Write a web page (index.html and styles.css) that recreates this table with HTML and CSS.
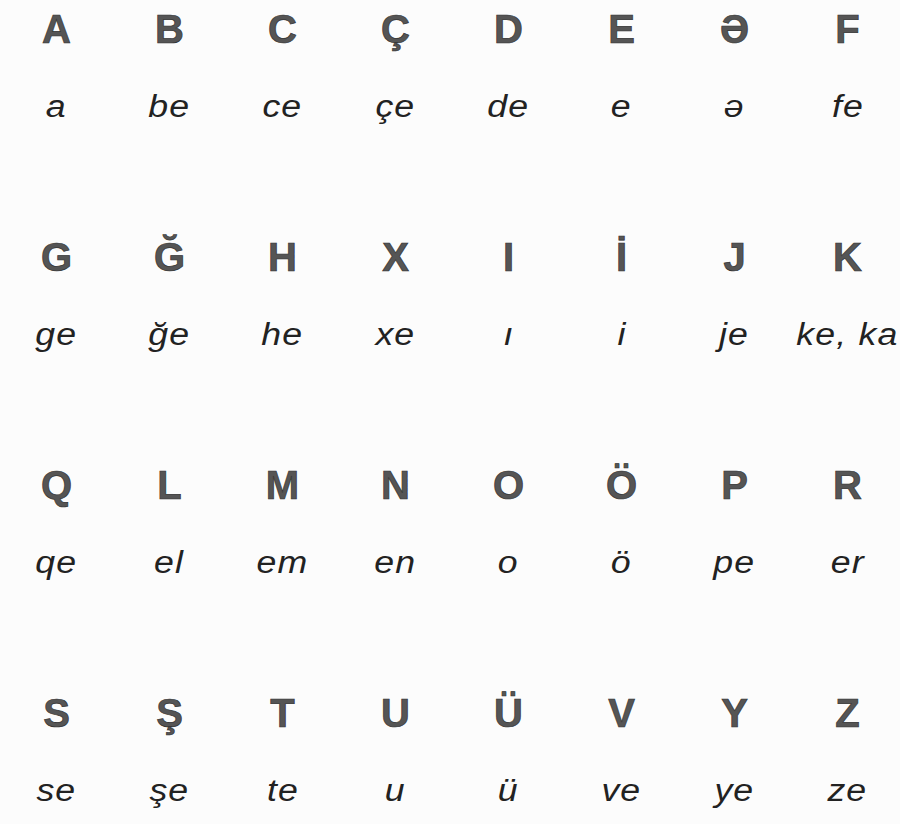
FILE: index.html
```html
<!DOCTYPE html>
<html lang="az">
<head>
<meta charset="utf-8">
<title>Azərbaycan əlifbası</title>
<link rel="stylesheet" href="styles.css">
</head>
<body>
<div class="chart">
  <div class="cell"><span class="letter">A</span><span class="name">a</span></div>
  <div class="cell"><span class="letter">B</span><span class="name">be</span></div>
  <div class="cell"><span class="letter">C</span><span class="name">ce</span></div>
  <div class="cell"><span class="letter">Ç</span><span class="name">çe</span></div>
  <div class="cell"><span class="letter">D</span><span class="name">de</span></div>
  <div class="cell"><span class="letter">E</span><span class="name">e</span></div>
  <div class="cell"><span class="letter">Ə</span><span class="name">ə</span></div>
  <div class="cell"><span class="letter">F</span><span class="name">fe</span></div>

  <div class="cell"><span class="letter">G</span><span class="name">ge</span></div>
  <div class="cell"><span class="letter">Ğ</span><span class="name">ğe</span></div>
  <div class="cell"><span class="letter">H</span><span class="name">he</span></div>
  <div class="cell"><span class="letter">X</span><span class="name">xe</span></div>
  <div class="cell"><span class="letter">I</span><span class="name">ı</span></div>
  <div class="cell"><span class="letter">İ</span><span class="name">i</span></div>
  <div class="cell"><span class="letter">J</span><span class="name">je</span></div>
  <div class="cell"><span class="letter">K</span><span class="name">ke, ka</span></div>

  <div class="cell"><span class="letter">Q</span><span class="name">qe</span></div>
  <div class="cell"><span class="letter">L</span><span class="name">el</span></div>
  <div class="cell"><span class="letter">M</span><span class="name">em</span></div>
  <div class="cell"><span class="letter">N</span><span class="name">en</span></div>
  <div class="cell"><span class="letter">O</span><span class="name">o</span></div>
  <div class="cell"><span class="letter">Ö</span><span class="name">ö</span></div>
  <div class="cell"><span class="letter">P</span><span class="name">pe</span></div>
  <div class="cell"><span class="letter">R</span><span class="name">er</span></div>

  <div class="cell"><span class="letter">S</span><span class="name">se</span></div>
  <div class="cell"><span class="letter">Ş</span><span class="name">şe</span></div>
  <div class="cell"><span class="letter">T</span><span class="name">te</span></div>
  <div class="cell"><span class="letter">U</span><span class="name">u</span></div>
  <div class="cell"><span class="letter">Ü</span><span class="name">ü</span></div>
  <div class="cell"><span class="letter">V</span><span class="name">ve</span></div>
  <div class="cell"><span class="letter">Y</span><span class="name">ye</span></div>
  <div class="cell"><span class="letter">Z</span><span class="name">ze</span></div>
</div>
</body>
</html>
```

FILE: styles.css
```css
html, body {
  margin: 0;
  padding: 0;
  background: #fcfcfc;
  overflow: hidden;
}

body {
  width: 900px;
  height: 824px;
  font-family: "Liberation Sans", Arial, sans-serif;
}

.chart {
  display: grid;
  grid-template-columns: repeat(8, 113px);
  grid-template-rows: repeat(3, 228px) 140px;
  width: 900px;
  height: 824px;
  overflow: hidden;
}

.cell {
  display: flex;
  flex-direction: column;
  align-items: center;
  padding-top: 9px;
  gap: 38px;
  white-space: nowrap;
}

.letter {
  font-size: 40px;
  line-height: 40px;
  font-weight: bold;
  color: #555;
  -webkit-text-stroke: 0.7px #333;
}

.name {
  display: inline-block;
  font-size: 31px;
  line-height: 40px;
  font-style: italic;
  letter-spacing: 1px;
  color: #222;
  transform: scaleX(1.15);
}
```
